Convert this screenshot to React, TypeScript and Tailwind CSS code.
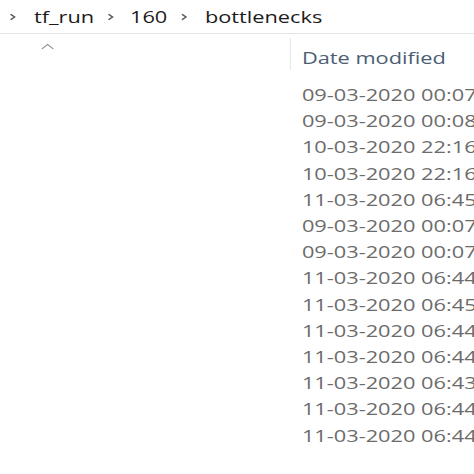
const dates = [
  '09-03-2020 00:07',
  '09-03-2020 00:08',
  '10-03-2020 22:16',
  '10-03-2020 22:16',
  '11-03-2020 06:45',
  '09-03-2020 00:07',
  '09-03-2020 00:07',
  '11-03-2020 06:44',
  '11-03-2020 06:45',
  '11-03-2020 06:44',
  '11-03-2020 06:44',
  '11-03-2020 06:43',
  '11-03-2020 06:44',
  '11-03-2020 06:44',
];

function Chevron() {
  return (
    <svg width="5" height="8" viewBox="0 0 5 8" className="shrink-0">
      <path d="M0.8 1.2 L3.8 4 L0.8 6.8" fill="none" stroke="#5a5a5a" strokeWidth="1.2" />
    </svg>
  );
}

export default function App() {
  return (
    <div className="w-[474px] h-[474px] bg-white overflow-hidden">
      {/* the screenshot is stretched sideways, so the whole view is too */}
      <div
        className="w-[349px] h-[474px] origin-top-left scale-x-[1.36] flex flex-col"
        style={{ fontFamily: '"Open Sans", "Noto Sans", sans-serif' }}
      >
        {/* Breadcrumb */}
        <div className="h-[34px] shrink-0 flex items-center border-b border-[#e3e3e3] pl-[7px] text-[16px] text-[#1b1b1b] whitespace-nowrap">
          <Chevron />
          <span className="ml-[13px] w-[54.4px] leading-none">tf_run</span>
          <Chevron />
          <span className="ml-[11.2px] w-[37.4px] leading-none">160</span>
          <Chevron />
          <span className="ml-[12.7px] leading-none">bottlenecks</span>
        </div>

        <div className="flex flex-1 min-h-0">
          {/* Name column, cut off on the left */}
          <div className="w-[213.2px] shrink-0 pt-[9px] pl-[29.6px]">
            <svg width="10" height="7" viewBox="0 0 10 7">
              <path d="M0.8 6 L5 1.5 L9.2 6" fill="none" stroke="#8c8c8c" strokeWidth="1" />
            </svg>
          </div>

          {/* Date modified column */}
          <div className="flex-1 min-w-0 flex flex-col">
            <div className="h-[48px] shrink-0 flex items-center">
              <div className="w-px h-[32px] bg-[#ebebeb] mt-[-8px]" />
              <span className="ml-[7.8px] text-[16px] text-[#4b5e72] whitespace-nowrap">Date modified</span>
            </div>
            <div className="flex flex-col">
              {dates.map((d, i) => (
                <div key={i} className="h-[26.2px] flex items-center pl-[8.8px] text-[16px] text-[#6b6b6b] whitespace-nowrap">
                  {d}
                </div>
              ))}
            </div>
          </div>
        </div>
      </div>
    </div>
  );
}
